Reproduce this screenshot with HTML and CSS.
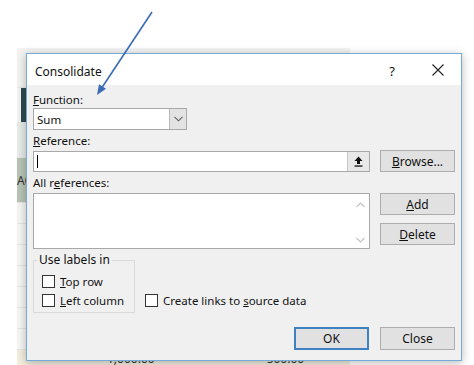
FILE: index.html
```html
<!DOCTYPE html>
<html lang="en">
<head>
    <meta charset="UTF-8">
    <title>Consolidate</title>
    <link rel="stylesheet" href="styles.css">
</head>
<body>
    <div class="screen">
        <!-- worksheet peeking out behind the dialog -->
        <div class="sheet">
            <div class="sheet-row top-band"></div>
            <div class="sheet-row tab-band"><span class="tab"></span></div>
            <div class="sheet-row pale-band"></div>
            <div class="sheet-row header-band"><span class="cell-text">AC</span></div>
            <div class="sheet-row"></div>
            <div class="sheet-row"></div>
            <div class="sheet-row"></div>
            <div class="sheet-row"></div>
            <div class="sheet-row"></div>
            <div class="sheet-row"></div>
            <div class="sheet-row"></div>
            <div class="sheet-row totals">
                <span class="total-a">1,000.00</span>
                <span class="total-b">500.00</span>
            </div>
        </div>

        <svg class="pointer" width="474" height="365" viewBox="0 0 474 365">
            <line x1="152" y1="12" x2="102.5" y2="86.7" stroke="#3a6bb4" stroke-width="1.6"/>
            <polygon points="97,95 106,88.8 99,84.3" fill="#3a6bb4"/>
        </svg>

        <div class="dialog">
            <div class="titlebar">
                <span class="title">Consolidate</span>
                <span class="caption-btn help">?</span>
                <span class="caption-btn">
                    <svg width="12" height="12" viewBox="0 0 12 12">
                        <path d="M0.5 0.5 L11.5 11.5 M11.5 0.5 L0.5 11.5" stroke="#222" stroke-width="1.1"/>
                    </svg>
                </span>
            </div>

            <div class="dialog-body">
                <div class="field-label"><u>F</u>unction:</div>
                <div class="combo">
                    <span class="combo-value">Sum</span>
                    <span class="combo-drop">
                        <svg width="9" height="6" viewBox="0 0 9 6">
                            <path d="M0.5 0.8 L4.5 4.8 L8.5 0.8" fill="none" stroke="#606060" stroke-width="1.1"/>
                        </svg>
                    </span>
                </div>

                <div class="field-label"><u>R</u>eference:</div>
                <div class="ref-row">
                    <div class="ref-input">
                        <span class="caret"></span>
                        <span class="collapse-btn">
                            <svg width="9" height="11" viewBox="0 0 9 11">
                                <path d="M4.5 0.5 L8.5 5 L6 5 L6 8 L3 8 L3 5 L0.5 5 Z" fill="#111"/>
                                <rect x="0.5" y="9.4" width="8" height="1.3" fill="#111"/>
                            </svg>
                        </span>
                    </div>
                    <button class="btn"><u>B</u>rowse...</button>
                </div>

                <div class="field-label">All r<u>e</u>ferences:</div>
                <div class="list-row">
                    <div class="ref-list">
                        <div class="scroll">
                            <svg width="9" height="6" viewBox="0 0 9 6">
                                <path d="M0.5 5 L4.5 1 L8.5 5" fill="none" stroke="#c2c2c2" stroke-width="1.1"/>
                            </svg>
                            <svg width="9" height="6" viewBox="0 0 9 6">
                                <path d="M0.5 1 L4.5 5 L8.5 1" fill="none" stroke="#c2c2c2" stroke-width="1.1"/>
                            </svg>
                        </div>
                    </div>
                    <div class="side-buttons">
                        <button class="btn"><u>A</u>dd</button>
                        <button class="btn"><u>D</u>elete</button>
                    </div>
                </div>

                <div class="options-row">
                    <fieldset class="labels-group">
                        <legend>Use labels in</legend>
                        <div class="check-list">
                            <label class="check"><span class="box"></span><span><u>T</u>op row</span></label>
                            <label class="check"><span class="box"></span><span><u>L</u>eft column</span></label>
                        </div>
                    </fieldset>
                    <label class="check links"><span class="box"></span><span>Create links to <u>s</u>ource data</span></label>
                </div>

                <div class="footer">
                    <button class="btn default">OK</button>
                    <button class="btn">Close</button>
                </div>
            </div>
        </div>
    </div>
</body>
</html>
```

FILE: styles.css
```css
body {
    margin: 0;
    background: #fff;
    font-family: "Noto Sans", "Open Sans", sans-serif;
    font-size: 11.5px;
    color: #111;
}
.screen {
    position: relative;
    width: 474px;
    height: 365px;
    overflow: hidden;
    background: #fff;
}

/* sheet behind */
.sheet {
    width: 333px;
    margin-left: 17px;
    padding-top: 48px;
}
.sheet-row {
    height: 20px;
    border-bottom: 1px solid #e6e6e2;
    background: #f6f6f4;
    display: flex;
    align-items: center;
}
.top-band {
    height: 39px;
    background: #f3f3f3;
}
.tab-band {
    height: 34px;
    background: #f3f3f3;
}
.tab {
    width: 6px;
    height: 34px;
    margin-left: 4px;
    background: #2f4b4e;
}
.pale-band {
    height: 34px;
    background: #e7ebe9;
}
.header-band {
    height: 44px;
    background: #b7c4b5;
}
.cell-text {
    font-size: 12px;
    color: #333;
}
.totals {
    height: 24px;
    background: #f3eedf;
    align-items: flex-start;
    font-size: 12px;
    color: #333;
}
.total-a {
    margin-left: 90px;
}
.total-b {
    margin-left: 112px;
}

.pointer {
    position: absolute;
    left: 0;
    top: 0;
    z-index: 3;
    pointer-events: none;
}

/* dialog */
.dialog {
    position: absolute;
    left: 26px;
    top: 53px;
    z-index: 2;
    width: 436px;
    height: 308px;
    box-sizing: border-box;
    border: 1px solid #74abd8;
    background: #f0f0f0;
    display: flex;
    flex-direction: column;
    box-shadow: 0 2px 9px rgba(0,0,0,0.28);
}
.titlebar {
    height: 31px;
    flex: none;
    background: #fff;
    display: flex;
    align-items: center;
    padding-left: 8px;
}
.title {
    font-size: 12px;
    color: #111;
    margin-top: 3px;
}
.caption-btn {
    width: 46px;
    height: 31px;
    display: flex;
    align-items: center;
    justify-content: center;
}
.help {
    margin-left: auto;
    font-size: 13px;
    padding-top: 3px;
    box-sizing: border-box;
}
.dialog-body {
    flex: 1;
    padding: 0 6px;
    display: flex;
    flex-direction: column;
}
.field-label {
    height: 16px;
    line-height: 16px;
    margin-top: 3px;
}
.dialog-body > .field-label:first-child {
    margin-top: 7px;
}
.combo {
    width: 154px;
    height: 22px;
    box-sizing: border-box;
    border: 1px solid #a9a9a9;
    background: #fff;
    display: flex;
    align-items: center;
}
.combo-value {
    flex: 1;
    padding-left: 3px;
}
.combo-drop {
    width: 17px;
    height: 20px;
    box-sizing: border-box;
    border-left: 1px solid #b8b8b8;
    background: #e3e3e3;
    display: flex;
    align-items: center;
    justify-content: center;
}
.ref-row {
    display: flex;
    align-items: center;
    gap: 10px;
    height: 22px;
    margin-top: 1px;
}
.ref-input {
    width: 337px;
    height: 21px;
    box-sizing: border-box;
    border: 1px solid #a9a9a9;
    background: #fff;
    display: flex;
    align-items: center;
}
.caret {
    width: 1px;
    height: 13px;
    margin-left: 3px;
    background: #000;
}
.collapse-btn {
    margin-left: auto;
    width: 22px;
    height: 19px;
    box-sizing: border-box;
    border-left: 1px solid #c8c8c8;
    background: #e8e8e8;
    display: flex;
    align-items: center;
    justify-content: center;
}
.btn {
    width: 75px;
    height: 22px;
    padding: 0;
    box-sizing: border-box;
    border: 1px solid #adadad;
    background: #e1e1e1;
    font-family: inherit;
    font-size: 12px;
    color: #111;
}
.list-row {
    display: flex;
    gap: 10px;
    margin-top: 2px;
}
.ref-list {
    width: 337px;
    height: 56px;
    box-sizing: border-box;
    border: 1px solid #a9a9a9;
    background: #fff;
    display: flex;
    justify-content: flex-end;
}
.scroll {
    width: 17px;
    display: flex;
    flex-direction: column;
    justify-content: space-between;
    align-items: center;
    padding: 8px 0 5px;
}
.side-buttons {
    display: flex;
    flex-direction: column;
    gap: 8px;
}
.options-row {
    display: flex;
    align-items: flex-end;
    margin-top: 3px;
}
.labels-group {
    width: 102px;
    box-sizing: border-box;
    margin: 0;
    padding: 0 0 2px 3px;
    border: 1px solid #dadada;
}
.labels-group legend {
    padding: 0 2px;
    height: 16px;
    line-height: 16px;
    font-size: 12px;
}
.check-list {
    padding: 4px 0 0 5px;
}
.check {
    display: flex;
    align-items: center;
    height: 19px;
    white-space: nowrap;
}
.box {
    width: 13px;
    height: 13px;
    box-sizing: border-box;
    border: 1px solid #333;
    background: #fff;
    margin-right: 5px;
}
.links {
    margin-left: 10px;
    margin-bottom: 3px;
}
.footer {
    display: flex;
    justify-content: flex-end;
    gap: 11px;
    margin-top: 14px;
}
.footer .btn {
    height: 23px;
}
.btn.default {
    border: 2px solid #3f82c4;
}
```
